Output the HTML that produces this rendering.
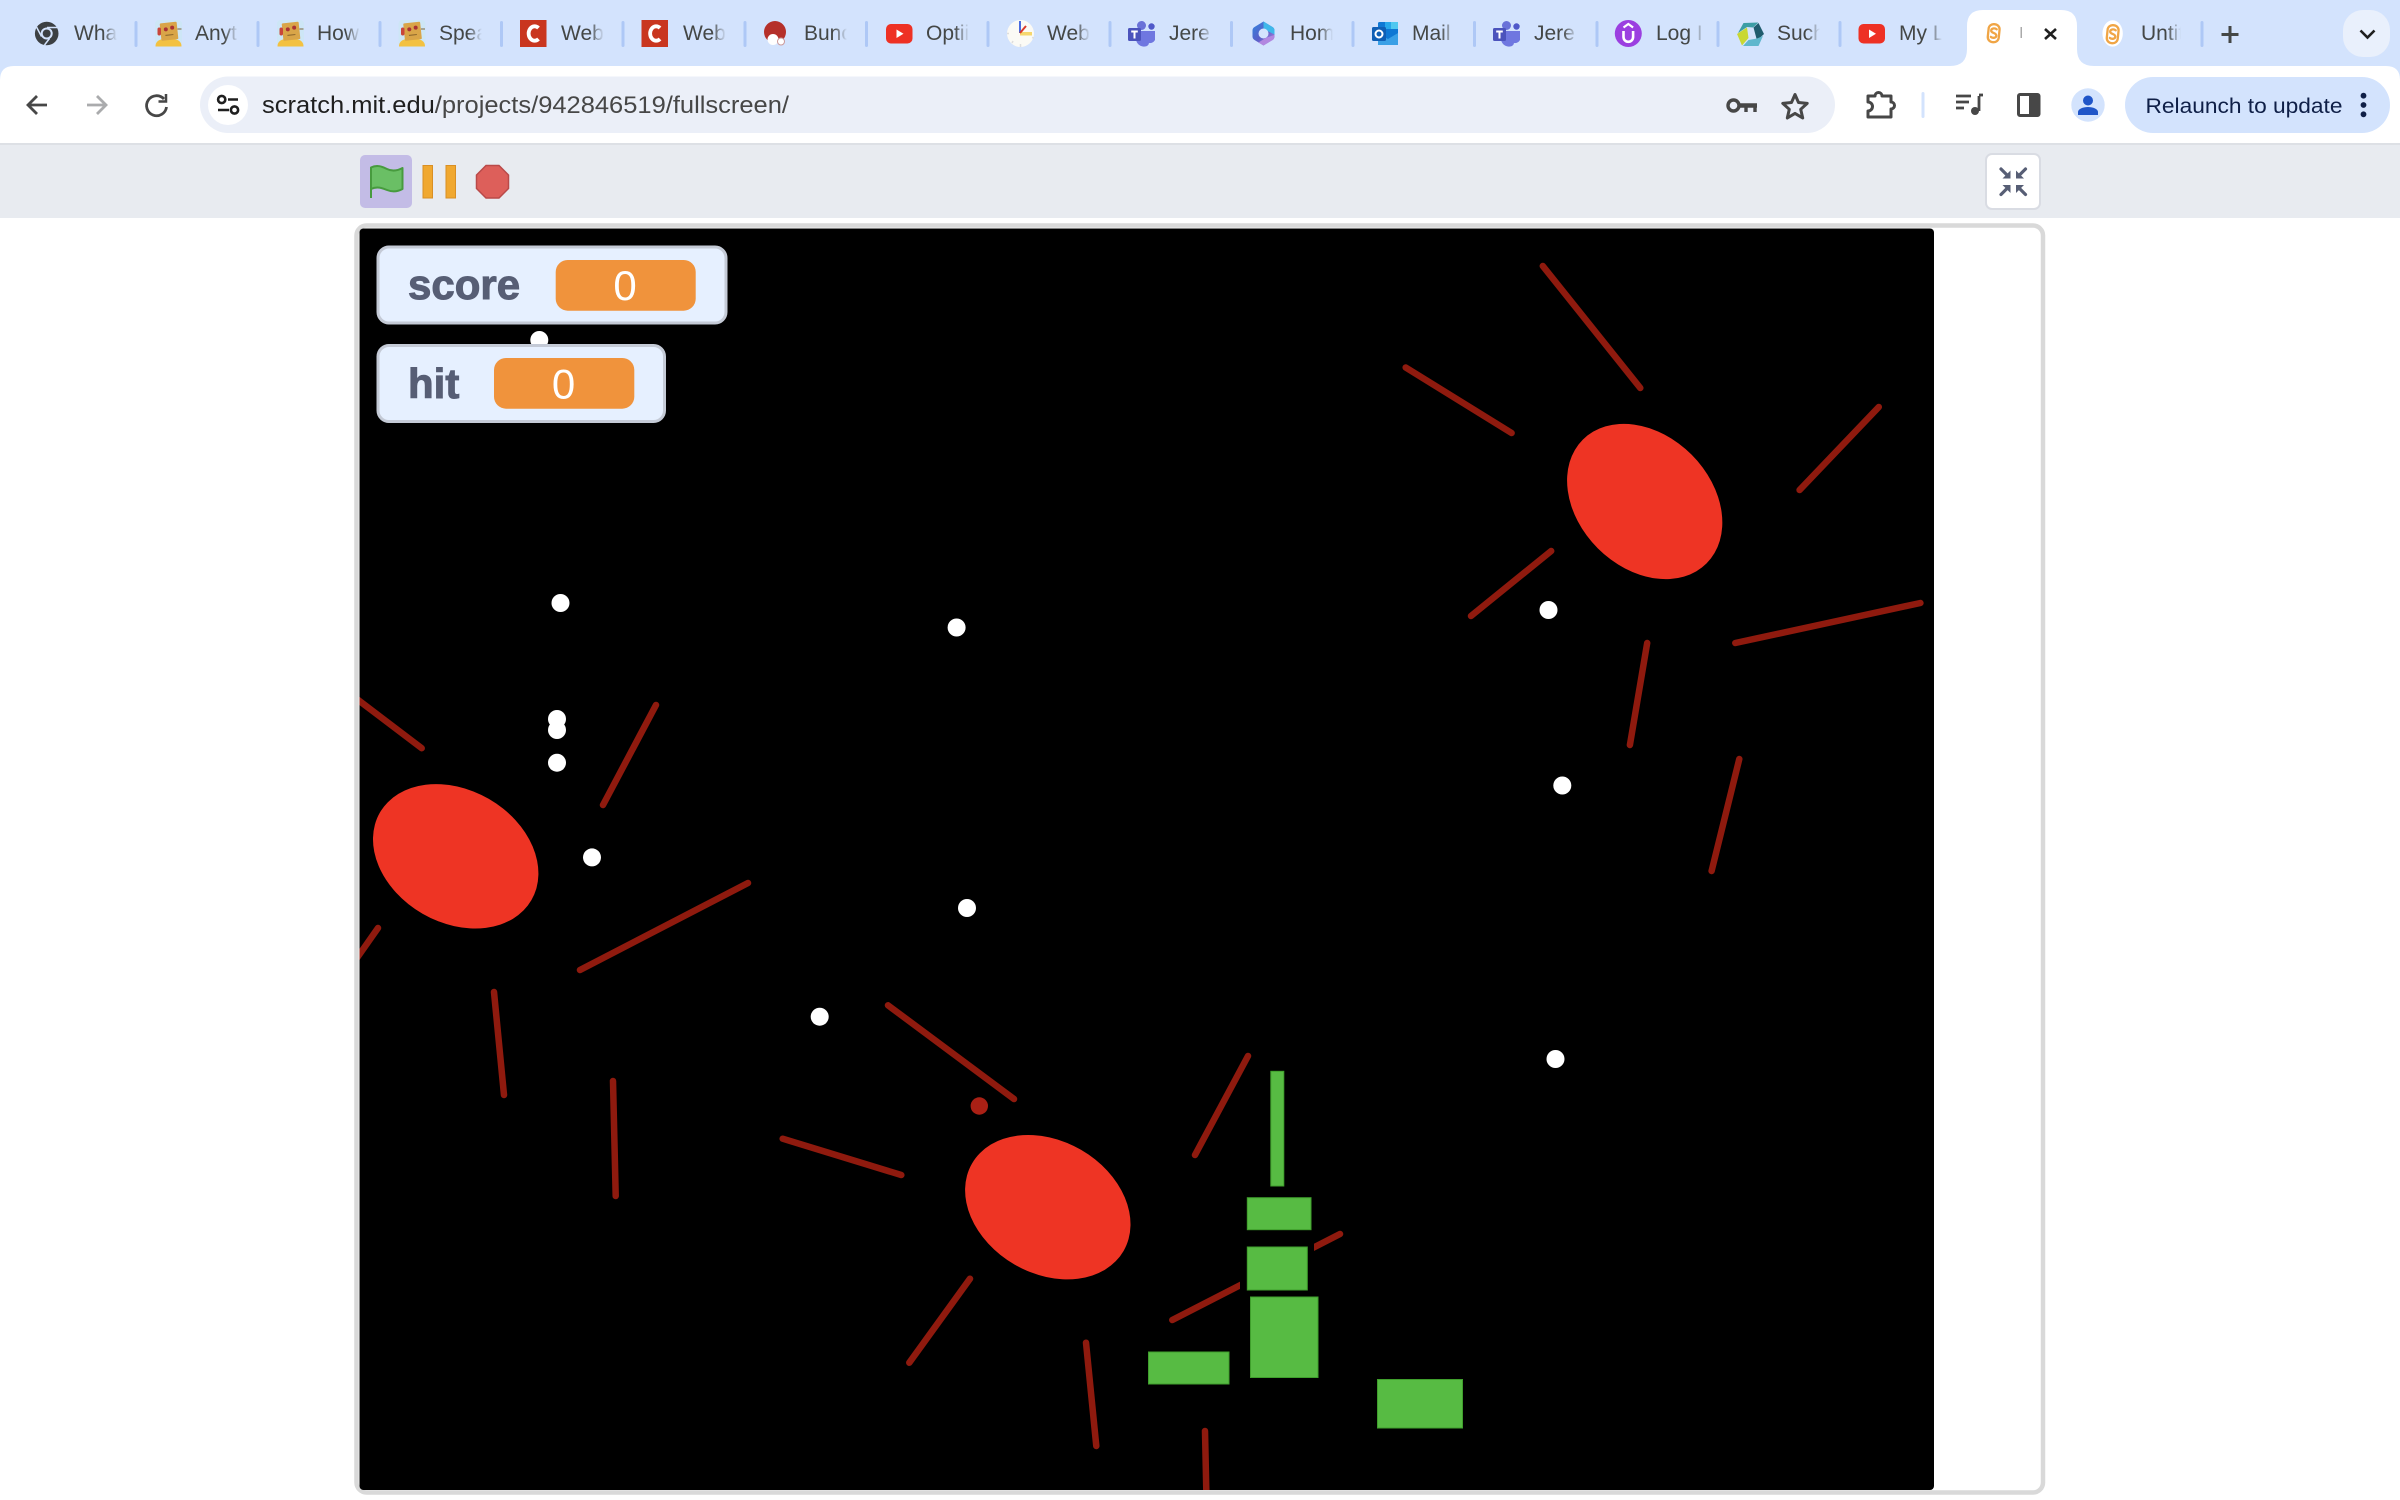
<!DOCTYPE html>
<html><head><meta charset="utf-8"><title>Scratch</title>
<style>html,body{margin:0;padding:0;background:#fff;width:2400px;height:1500px;overflow:hidden}svg{display:block}text{font-family:"Liberation Sans",sans-serif}</style></head>
<body>
<svg width="2400" height="1500" viewBox="0 0 2400 1500" xmlns="http://www.w3.org/2000/svg">
<defs>
<linearGradient id="fade"><stop offset="0" stop-color="#d3e3fd" stop-opacity="0"/><stop offset="1" stop-color="#d3e3fd"/></linearGradient>
<linearGradient id="m365" x1="0" y1="0" x2="1" y2="1"><stop offset="0" stop-color="#2f86e0"/><stop offset=".5" stop-color="#5a5fc8"/><stop offset="1" stop-color="#b583dd"/></linearGradient>
<clipPath id="st"><rect x="359.5" y="228.5" width="1574.5" height="1261.5" rx="4"/></clipPath>
<g id="robot">
<rect width="27" height="27" rx="4" fill="#cde6f6"/>
<path d="M0.500,26.500c0-6 5-8 13-8s13,2 13,8z" fill="#f3c141"/>
<g transform="rotate(-6 14 11)"><rect x="5.500" y="2.500" width="17" height="17.500" rx="1" fill="#d9a548"/><circle cx="11" cy="9" r="2" fill="#a33"/><circle cx="17.500" cy="8" r="2" fill="#a33"/><path d="M10,15h8" stroke="#84602a" stroke-width="1"/></g>
<rect x="2.500" y="7.500" width="3.500" height="8" rx="1.700" fill="#c9453a"/><path d="M22.500,9h4" stroke="#8a7a5a" stroke-width="1.200"/>
</g>
<g id="canvas"><rect width="26.500" height="27" fill="#c9361f"/><path d="M18.500,8A6,7.200 0 1 0 18.500,19" fill="none" stroke="#fff" stroke-width="3.800"/></g>
<g id="yt"><rect width="26.500" height="19.500" rx="5" fill="#ee3124"/><path d="M10.500,5.500L17.500,9.750L10.500,14z" fill="#fff"/></g>
<g id="teams"><circle cx="13.500" cy="4.500" r="4.500" fill="#6a72d8"/><circle cx="23.500" cy="5.500" r="3.200" fill="#5059c9"/><path d="M8,10h19v9a6,6 0 0 1-6,3a4,4 0 0 1-4,3.500a8,8 0 0 1-9-7z" fill="#6f77e0"/><rect y="7" width="13" height="13" rx="1.500" fill="#4b53bc"/><path d="M3.200,10.500h6.600M6.500,10.500v7" stroke="#fff" stroke-width="2"/></g>
<g id="sv" fill="none" stroke="#f0a545" stroke-width="2.300" stroke-linecap="round" stroke-linejoin="round"><rect x="1.200" y="1.200" width="11" height="18" rx="5" transform="rotate(6 6.700 10)"/><path d="M9.700,6.300C7.500,4.700 4.200,5.300 4.200,7.700C4.200,10.200 9.300,9.600 9.300,12.500C9.300,15 6,15.500 3.800,13.900"/></g>
</defs>

<!-- tab strip -->
<rect width="2400" height="66" fill="#d3e3fd"/>
<rect y="66" width="2400" height="77" fill="#fff"/>
<path d="M0,66h14q-14,0-14,14z" fill="#d3e3fd"/>
<path d="M2400,66h-14q14,0 14,14z" fill="#d3e3fd"/>
<rect y="143" width="2400" height="2" fill="#dde0e5"/>
<rect y="145" width="2400" height="73" fill="#e8ebf0"/>

<!-- tab titles -->
<g font-size="21" fill="#444746">
<text x="74" y="40">What</text><text x="195" y="40">Anyt</text><text x="317" y="40">How</text><text x="439" y="40">Spea</text><text x="561" y="40">Webi</text><text x="683" y="40">Webi</text><text x="804" y="40">Bunc</text><text x="926" y="40">Optii</text><text x="1047" y="40">Webi</text><text x="1169" y="40">Jere</text><text x="1290" y="40">Hom</text><text x="1412" y="40">Mail</text><text x="1534" y="40">Jere</text><text x="1656" y="40">Log I</text><text x="1777" y="40">Such</text><text x="1899" y="40">My L</text><text x="2141" y="40">Untit</text>
</g>
<g>
<rect x="103" y="18" width="14" height="30" fill="url(#fade)"/><rect x="117" y="18" width="17" height="30" fill="#d3e3fd"/>
<rect x="224" y="18" width="14" height="30" fill="url(#fade)"/><rect x="238" y="18" width="17" height="30" fill="#d3e3fd"/>
<rect x="346" y="18" width="14" height="30" fill="url(#fade)"/><rect x="360" y="18" width="17" height="30" fill="#d3e3fd"/>
<rect x="468" y="18" width="14" height="30" fill="url(#fade)"/><rect x="482" y="18" width="17" height="30" fill="#d3e3fd"/>
<rect x="590" y="18" width="14" height="30" fill="url(#fade)"/><rect x="604" y="18" width="17" height="30" fill="#d3e3fd"/>
<rect x="712" y="18" width="14" height="30" fill="url(#fade)"/><rect x="726" y="18" width="17" height="30" fill="#d3e3fd"/>
<rect x="833" y="18" width="14" height="30" fill="url(#fade)"/><rect x="847" y="18" width="17" height="30" fill="#d3e3fd"/>
<rect x="955" y="18" width="14" height="30" fill="url(#fade)"/><rect x="969" y="18" width="17" height="30" fill="#d3e3fd"/>
<rect x="1076" y="18" width="14" height="30" fill="url(#fade)"/><rect x="1090" y="18" width="17" height="30" fill="#d3e3fd"/>
<rect x="1198" y="18" width="14" height="30" fill="url(#fade)"/><rect x="1212" y="18" width="17" height="30" fill="#d3e3fd"/>
<rect x="1319" y="18" width="14" height="30" fill="url(#fade)"/><rect x="1333" y="18" width="17" height="30" fill="#d3e3fd"/>
<rect x="1441" y="18" width="14" height="30" fill="url(#fade)"/><rect x="1455" y="18" width="17" height="30" fill="#d3e3fd"/>
<rect x="1563" y="18" width="14" height="30" fill="url(#fade)"/><rect x="1577" y="18" width="17" height="30" fill="#d3e3fd"/>
<rect x="1690" y="18" width="14" height="30" fill="url(#fade)"/><rect x="1704" y="18" width="12" height="30" fill="#d3e3fd"/>
<rect x="1806" y="18" width="14" height="30" fill="url(#fade)"/><rect x="1820" y="18" width="17" height="30" fill="#d3e3fd"/>
<rect x="1928" y="18" width="14" height="30" fill="url(#fade)"/><rect x="1942" y="18" width="15" height="30" fill="#d3e3fd"/>
<rect x="2167" y="18" width="14" height="30" fill="url(#fade)"/><rect x="2181" y="18" width="19" height="30" fill="#d3e3fd"/>
</g>
<!-- separators -->
<g fill="#aec8f6">
<rect x="134.500" y="21" width="3" height="26" rx="1.500"/><rect x="256.500" y="21" width="3" height="26" rx="1.500"/><rect x="378.500" y="21" width="3" height="26" rx="1.500"/><rect x="500" y="21" width="3" height="26" rx="1.500"/><rect x="621.500" y="21" width="3" height="26" rx="1.500"/><rect x="743.500" y="21" width="3" height="26" rx="1.500"/><rect x="865" y="21" width="3" height="26" rx="1.500"/><rect x="986.500" y="21" width="3" height="26" rx="1.500"/><rect x="1108.500" y="21" width="3" height="26" rx="1.500"/><rect x="1230" y="21" width="3" height="26" rx="1.500"/><rect x="1351.500" y="21" width="3" height="26" rx="1.500"/><rect x="1473" y="21" width="3" height="26" rx="1.500"/><rect x="1595.500" y="21" width="3" height="26" rx="1.500"/><rect x="1716.500" y="21" width="3" height="26" rx="1.500"/><rect x="1838.500" y="21" width="3" height="26" rx="1.500"/><rect x="2200.500" y="21" width="3" height="26" rx="1.500"/>
</g>

<!-- favicons -->
<g>
<circle cx="46.700" cy="33.500" r="11.800" fill="#3c4043"/><circle cx="46.700" cy="33.500" r="6" fill="#d3e3fd"/><circle cx="46.700" cy="33.500" r="4" fill="#3c4043"/>
<path d="M47,27.500H57.500M41.500,36.500L36.500,27M49.500,38.500L44.500,45" stroke="#d3e3fd" stroke-width="1.500"/>
<use href="#robot" x="155" y="20"/><use href="#robot" x="277" y="20"/><use href="#robot" x="398.500" y="20"/>
<use href="#canvas" x="520" y="20"/><use href="#canvas" x="641.500" y="20"/>
<circle cx="775" cy="32" r="11" fill="#b5302a"/><circle cx="773" cy="39.500" r="5.500" fill="#fff"/><circle cx="781" cy="41.500" r="3.500" fill="#fff" stroke="#c99" stroke-width="1"/>
<use href="#yt" x="886" y="24"/>
<circle cx="1020.500" cy="33.500" r="13.500" fill="#fbfaf5"/><rect x="1020" y="32" width="12" height="3.500" fill="#f6d76e"/><path d="M1020,21V33" stroke="#4a6be0" stroke-width="2"/><path d="M1020,33L1026,26" stroke="#d93a2b" stroke-width="2"/>
<g stroke="#ddd" stroke-width="1.500"><path d="M1020.500,44v3M1009,33.500h-2M1034,38l-2-.5M1012,43l1-2"/></g>
<use href="#teams" x="1128" y="21"/>
<path d="M1263.500,21.500l9,5.500a4,4 0 0 1 2,3.500v6a4,4 0 0 1-2,3.500l-9,5.500l-9-5.500a4,4 0 0 1-2-3.500v-6a4,4 0 0 1 2-3.500z" fill="url(#m365)"/>
<path d="M1263.500,21.500l9,5.500a4,4 0 0 1 2,3.500v4l-5-2.500l-6-3z" fill="#3fb8ea"/>
<path d="M1274.500,35l-1,4.500l-10,6l-5-3l8-5z" fill="#b287e0"/>
<circle cx="1263.500" cy="33.500" r="5" fill="#d3e3fd"/>
<rect x="1378" y="22" width="20" height="23" rx="1.500" fill="#0f78d4"/><rect x="1385" y="22" width="7" height="7" fill="#28a8ea"/><rect x="1391" y="22" width="7" height="7" fill="#50c8f0"/><path d="M1378,33l10,6l10-6v12h-20z" fill="#3aa0e6"/>
<rect x="1372" y="27" width="14" height="14" rx="1.500" fill="#0f5fb5"/><circle cx="1379" cy="34" r="3.500" fill="none" stroke="#fff" stroke-width="2"/>
<use href="#teams" x="1493" y="21"/>
<circle cx="1628.300" cy="33.500" r="13.500" fill="#9b3fe0"/><path d="M1623.500,31v6a4.800,4.800 0 0 0 9.600,0v-6" fill="none" stroke="#fff" stroke-width="2.600"/><path d="M1623.500,27.500l4.800-3.500l4.800,3.500" fill="none" stroke="#fff" stroke-width="2.200"/>
<path d="M1743.500,23L1758.300,22.500L1753,27.500L1747,27L1738,33z" fill="#3c9ea5"/><path d="M1753.500,27.500L1758.500,23L1764,34L1757,40.500z" fill="#1f5c6e"/><path d="M1737,34L1747,27.500L1748.500,38L1742,45.500z" fill="#c9d832"/><path d="M1743,46L1748.500,40L1757,38.500L1763,36L1758.500,46z" fill="#5fb7cd"/>
<use href="#yt" x="1858.500" y="24"/>
</g>

<!-- active tab -->
<path d="M1950,66q17,0 17-17V26q0-16 16-16H2061q16,0 16,16V49q0,17 17,17z" fill="#fff"/>
<use href="#sv" x="1987" y="23"/>
<rect x="2020.500" y="27" width="1.500" height="11" fill="#aaa"/>
<path d="M2045,29l11,10M2056,29l-11,10" stroke="#1f1f1f" stroke-width="2.600"/>
<circle cx="2112.500" cy="33.500" r="12" fill="#fff" transform="matrix(.85 0 0 1.100 317 -3.400)"/>
<use href="#sv" x="2106" y="24"/>
<path d="M2230,26v17M2221.500,34.500h17" stroke="#444746" stroke-width="3"/>
<rect x="2343" y="10" width="47" height="47" rx="20" fill="#e9f0fc"/>
<path d="M2360.500,30.500l7,7l7-7" fill="none" stroke="#1f1f1f" stroke-width="2.600"/>

<!-- toolbar -->
<g fill="none" stroke="#474747" stroke-width="2.800">
<path d="M47,105H29M37,96l-9,9l9,9"/>
<path d="M87,105H105M97,96l9,9l-9,9" stroke="#aaabad"/>
<path d="M164,99a10,10 0 1 0 2.500,8"/><path d="M166,94v7.500h-7.500" stroke-width="2.500"/>
</g>
<rect x="200" y="76.500" width="1635" height="56.500" rx="28.250" fill="#ebeff8"/>
<circle cx="228" cy="105" r="20" fill="#fff"/>
<g fill="none" stroke="#1f1f1f" stroke-width="2.600"><circle cx="221.700" cy="99.500" r="3.600"/><path d="M228,99.500h10M218,110h11"/><circle cx="234.500" cy="110" r="3.600"/></g>
<text x="262" y="113" font-size="24" fill="#474747" textLength="527" lengthAdjust="spacingAndGlyphs"><tspan fill="#1f1f1f">scratch.mit.edu</tspan>/projects/942846519/fullscreen/</text>

<!-- key -->
<g fill="none" stroke="#474747"><circle cx="1733.500" cy="105.500" r="5.500" stroke-width="3.400"/><path d="M1739,105.500h18" stroke-width="4.400"/><path d="M1746,106v6M1755,106v6" stroke-width="3.400"/></g>
<path d="M1795,94.500l3.500,8l8.700,.9l-6.500,5.900l2,8.700l-7.700-4.600l-7.700,4.600l2-8.700l-6.500-5.900l8.700-.9z" fill="none" stroke="#474747" stroke-width="3" stroke-linejoin="round"/>
<path d="M1868,96h7a3.500,3.500 0 0 1 7,0h9v6a3.500,3.500 0 0 1 0,7v8h-23v-6a4.500,4.500 0 0 0 0-9z" fill="none" stroke="#474747" stroke-width="3" stroke-linejoin="round"/>
<rect x="1921.500" y="92" width="3" height="26" rx="1.500" fill="#d3e3fd"/>
<g stroke="#474747" stroke-width="2.800" fill="none"><path d="M1956,96h15M1956,102h13M1956,108h8"/><path d="M1979,96v15"/><path d="M1979,95h4"/></g>
<circle cx="1975" cy="111" r="4" fill="#474747"/>
<rect x="2018.500" y="94.500" width="20.500" height="21" rx="1.500" fill="#fff" stroke="#474747" stroke-width="3"/><rect x="2029" y="94" width="10.500" height="22" fill="#474747"/>
<circle cx="2088" cy="105" r="16.700" fill="#d3e3fd"/><circle cx="2088" cy="100.500" r="5" fill="#1f55c8"/><path d="M2078,115v-3c0-3 5-5 10-5s10,2 10,5v3z" fill="#1f55c8"/>
<rect x="2125" y="77" width="265" height="56" rx="28" fill="#d3e3fd"/>
<text x="2145.500" y="113" font-size="21.500" fill="#0f1f47" textLength="197" lengthAdjust="spacingAndGlyphs">Relaunch to update</text>
<g fill="#0f1f47"><circle cx="2363.500" cy="95.700" r="2.900"/><circle cx="2363.500" cy="105" r="2.900"/><circle cx="2363.500" cy="114.300" r="2.900"/></g>

<!-- scratch controls -->
<rect x="360" y="155" width="52" height="53" rx="5" fill="#c3bce6"/>
<path d="M371,198V167.500c6-3 11-1 16,1.500s10,2 15.500-1V189c-5.500,3-10.500,3-15.500,1s-10-4-16-1" fill="#6abf65" stroke="#479b3e" stroke-width="2" stroke-linejoin="round"/>
<rect x="423" y="165.500" width="9.500" height="32.500" fill="#f0a830" stroke="#d98f24"/><rect x="446" y="165.500" width="9.500" height="32.500" fill="#f0a830" stroke="#d98f24"/>
<path d="M486,165.500h13l9.500,9.500v13.500l-9.500,9.500h-13l-9.500-9.500V175z" fill="#dd5f5a" stroke="#b94a49" stroke-width="1.500"/>
<rect x="1986" y="154" width="54" height="55" rx="6" fill="#fff" stroke="#d9dce3" stroke-width="2"/>
<g fill="#575e75">
<path d="M2010.500,178.500v-8l-8,8z"/><path d="M2016,178.500v-8l8,8z"/><path d="M2010.500,185v8l-8-8z"/><path d="M2016,185v8l8-8z"/>
</g>
<path d="M2001,169l5.500,5.500M2025.500,169l-5.500,5.500M2001,194.500l5.500-5.500M2025.500,194.500l-5.500-5.500" stroke="#575e75" stroke-width="3.200" stroke-linecap="round"/>

<!-- stage -->
<rect x="356.500" y="225.500" width="1686.500" height="1267" rx="10" fill="#fff" stroke="#d9d9d9" stroke-width="4.500"/>
<rect x="359.500" y="228.500" width="1574.500" height="1261.500" rx="4" fill="#000"/>
<g clip-path="url(#st)">
<g stroke="#8f1a0e" stroke-width="6.500" stroke-linecap="round" fill="none">
<path d="M1542.800,266L1640.300,388M1405.700,367.500L1511.600,433M1878.800,407L1799.600,490M1551.200,551L1471,616M1920.400,603L1735.300,643M1647.200,643L1629.900,745M1739.300,759L1711.600,871"/>
<path d="M345,690L421.700,748.200M656,705L603,805M748,883L580,970M378,928L345,975M494,992L504,1095M613,1081L615.700,1196"/>
<path d="M888,1005.300L1014,1099M782.700,1138.700L901.300,1175M970,1278.700L909.300,1362.700M1086,1342.700L1096.300,1446"/>
<path d="M1248,1056L1195,1155M1172.300,1320L1340,1234M1205,1431L1206.500,1500"/>
</g>
<rect x="1240" y="1190" width="74" height="110" fill="#000"/>
<g fill="#ee3424">
<ellipse cx="1644.700" cy="501.500" rx="87.500" ry="66.300" transform="rotate(45 1644.700 501.500)"/>
<ellipse cx="455.700" cy="856.300" rx="87.500" ry="66.300" transform="rotate(30 455.700 856.300)"/>
<ellipse cx="1047.800" cy="1207.200" rx="87.500" ry="66.300" transform="rotate(30 1047.800 1207.200)"/>
</g>
<g fill="#fff">
<circle cx="539.300" cy="340" r="9"/><circle cx="560.500" cy="603" r="9"/><circle cx="956.600" cy="627.500" r="9"/><circle cx="557" cy="719" r="9"/><circle cx="557" cy="730" r="9"/><circle cx="557" cy="762.700" r="9"/><circle cx="592" cy="857.400" r="9"/><circle cx="967" cy="908" r="9"/><circle cx="819.700" cy="1016.700" r="9"/><circle cx="1548.500" cy="610" r="9"/><circle cx="1562.300" cy="785.500" r="9"/><circle cx="1555.500" cy="1059" r="9"/>
</g>
<circle cx="979.300" cy="1106" r="8.700" fill="#aa2015"/>
<g fill="#57bb43" stroke="#3f9f2c" stroke-width="1">
<rect x="1270.800" y="1071.300" width="13" height="114.700"/>
<rect x="1247.300" y="1197.700" width="63.700" height="32"/>
<rect x="1247.300" y="1247" width="60" height="43"/>
<rect x="1250.500" y="1297" width="67.500" height="80.500"/>
<rect x="1148.500" y="1352" width="80.500" height="32"/>
<rect x="1377.500" y="1379.500" width="85" height="48.500"/>
</g>
</g>

<!-- monitors -->
<rect x="378" y="247" width="348" height="76" rx="11" fill="#e6f0ff" stroke="#c4cad6" stroke-width="3"/>
<rect x="555.700" y="260" width="140" height="50.700" rx="12" fill="#f0933c"/>
<text x="408" y="299" font-size="42" font-weight="700" fill="#575e75" stroke="#575e75" stroke-width="1">score</text>
<text x="625" y="300" font-size="42" fill="#fff" text-anchor="middle">0</text>
<rect x="378" y="345.500" width="286.500" height="76" rx="11" fill="#e6f0ff" stroke="#c4cad6" stroke-width="3"/>
<rect x="494" y="358" width="140.300" height="50.700" rx="12" fill="#f0933c"/>
<text x="408" y="398" font-size="42" font-weight="700" fill="#575e75" stroke="#575e75" stroke-width="1">hit</text>
<text x="563.500" y="398.500" font-size="42" fill="#fff" text-anchor="middle">0</text>
</svg>
</body></html>
